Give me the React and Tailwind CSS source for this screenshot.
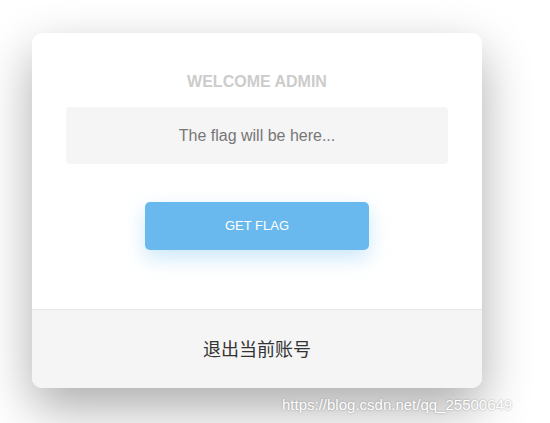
import React from 'react';

const App = () => {
  return (
    <div className="relative w-[550px] h-[423px] bg-white overflow-hidden pt-[33px] pl-[32px]" style={{ fontFamily: '"Liberation Sans", Arial, sans-serif' }}>
      <div className="w-[450px] rounded-[10px] bg-white shadow-[0_20px_50px_rgba(0,0,0,0.33)] overflow-hidden">
        <div className="flex flex-col items-center pt-[39px] pb-[59px] px-[34px]">
          <h3 className="text-[16px] leading-[20px] font-bold text-[#cccccc]">WELCOME ADMIN</h3>
          <div className="mt-[15px] w-full h-[57px] rounded-[4px] bg-[#f5f5f5] flex items-center justify-center text-[16px] text-[#777777]">
            The flag will be here...
          </div>
          <button className="mt-[38px] w-[224px] h-[48px] rounded-[5px] bg-[#6ab9ee] text-white text-[13px] shadow-[0_8px_20px_rgba(106,185,238,0.35)]">
            GET FLAG
          </button>
        </div>
        <div className="h-[79px] border-t border-[#e3e6ea] bg-[#f5f5f5] flex items-center justify-center text-[18px] text-[#333333] pb-[2px]" style={{ fontFamily: '"Noto Sans CJK SC", sans-serif' }}>
          退出当前账号
        </div>
      </div>
      <div className="absolute left-[282px] top-[394px] text-[15px] text-white [text-shadow:0_0_2px_rgba(0,0,0,0.35)]" style={{ fontFamily: '"Liberation Sans", Arial, sans-serif' }}>
        https://blog.csdn.net/qq_25500649
      </div>
    </div>
  );
};

export default App;
